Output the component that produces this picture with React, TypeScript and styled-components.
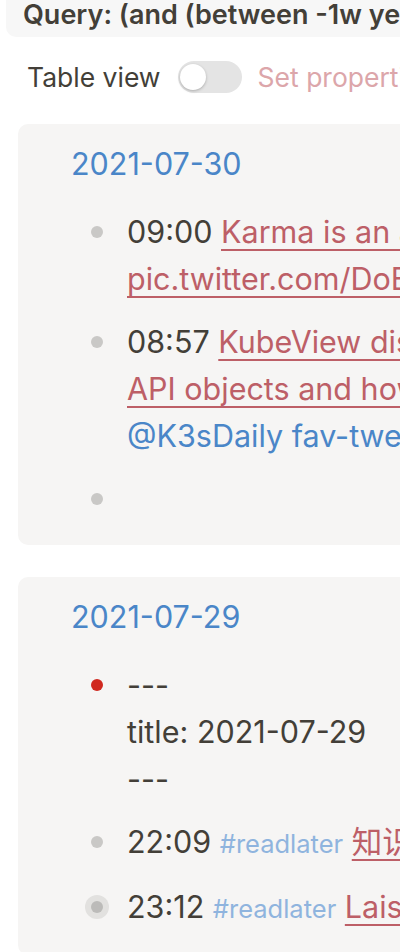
import React from "react";
import styled, { createGlobalStyle } from "styled-components";

const COLOURS = {
  Text: "#433f38",
  Blue: "#4a86c8",
  Link: "#bd5f67",
  Tag: "#8fb4de",
  Pink: "#dca6aa",
  Card: "#f6f5f4",
  Header: "#f7f7f7",
  Bullet: "#c9c8c6",
};

const GlobalStyle = createGlobalStyle`
  html, body {
    margin: 0;
    padding: 0;
    width: 400px;
    height: 952px;
    overflow: hidden;
    background: #ffffff;
  }
  body {
    font-family: Inter, "Noto Sans", "Noto Sans CJK SC", sans-serif;
    color: ${COLOURS.Text};
  }
`;

const Page = styled.div`
  width: 900px;
  display: flex;
  flex-flow: column nowrap;
`;

const QueryHeader = styled.div`
  margin-left: 6px;
  padding: 0 0 7px 17px;
  background-color: ${COLOURS.Header};
  border-bottom-left-radius: 10px;
  font-size: 27px;
  line-height: 30px;
  font-weight: 600;
  white-space: nowrap;
`;

const Toolbar = styled.div`
  display: flex;
  align-items: center;
  margin: 24px 0 31px 27px;
  height: 32px;
  font-size: 26.5px;
  white-space: nowrap;
`;

const Toggle = styled.span`
  position: relative;
  width: 64px;
  height: 32px;
  margin: 0 16px 0 17px;
  border-radius: 16px;
  background-color: #e4e4e4;

  &::after {
    content: "";
    position: absolute;
    left: 2px;
    top: 3px;
    width: 26px;
    height: 26px;
    border-radius: 50%;
    background: #ffffff;
    box-shadow: 0 1px 3px rgba(0, 0, 0, 0.25);
  }
`;

const SetProps = styled.span`
  color: ${COLOURS.Pink};
`;

const Cards = styled.div`
  display: flex;
  flex-flow: column nowrap;
  gap: 32px;
  margin-left: 18px;
`;

const Card = styled.section`
  padding: 16px 0 23px;
  background-color: ${COLOURS.Card};
  border-radius: 10px;
  font-size: 30.5px;
  line-height: 47px;
`;

const PageTitle = styled.div`
  padding-left: 53px;
  margin-bottom: 21px;
  color: ${COLOURS.Blue};
`;

const Blocks = styled.div`
  display: flex;
  flex-flow: column nowrap;
  gap: 16px;
`;

const Block = styled.div`
  display: grid;
  grid-template-columns: 24px 1fr;
  column-gap: 18px;
  padding-left: 67px;
  min-height: 47px;
  white-space: nowrap;
`;

const BulletCell = styled.span`
  display: flex;
  align-items: center;
  justify-content: center;
  height: 47px;
`;

const Dot = styled.span<{ $colour?: string; $collapsed?: boolean }>`
  display: block;
  width: 12px;
  height: 12px;
  border-radius: 50%;
  background-color: ${(p) => p.$colour ?? COLOURS.Bullet};
  box-shadow: ${(p) => (p.$collapsed ? "0 0 0 6px #e2e1df" : "none")};
`;

const Link = styled.span`
  color: ${COLOURS.Link};
  text-decoration: underline;
  text-decoration-thickness: 2px;
  text-underline-offset: 6px;
`;

const PageRef = styled.span`
  color: ${COLOURS.Blue};
`;

const Tag = styled.span`
  color: ${COLOURS.Tag};
  font-size: 25.5px;
`;

interface BulletProps {
  colour?: string;
  collapsed?: boolean;
  children?: React.ReactNode;
}

const Bullet = ({ colour, collapsed, children }: BulletProps) => (
  <Block>
    <BulletCell>
      <Dot $colour={colour} $collapsed={collapsed} />
    </BulletCell>
    <div>{children}</div>
  </Block>
);

export default function App() {
  return (
    <>
      <GlobalStyle />
      <Page>
        <QueryHeader>Query: (and (between -1w yesterday) (task TODO))</QueryHeader>
        <Toolbar>
          Table view
          <Toggle />
          <SetProps>Set properties</SetProps>
        </Toolbar>

        <Cards>
          <Card>
            <PageTitle>2021-07-30</PageTitle>
            <Blocks>
              <Bullet>
                09:00{" "}
                <Link>
                  Karma is an awesome terminal tool for Kubernetes
                  <br />
                  pic.twitter.com/DoBqLx2mVz
                </Link>
              </Bullet>
              <Bullet>
                08:57{" "}
                <Link>
                  KubeView displays Kubernetes cluster
                  <br />
                  API objects and how they are connected
                </Link>
                <br />
                <PageRef>@K3sDaily</PageRef> <PageRef>fav-tweets</PageRef>
              </Bullet>
              <Bullet />
            </Blocks>
          </Card>

          <Card>
            <PageTitle>2021-07-29</PageTitle>
            <Blocks>
              <Bullet colour="#d0291f">
                ---
                <br />
                title: 2021-07-29
                <br />
                ---
              </Bullet>
              <Bullet>
                22:09 <Tag>#readlater</Tag> <Link>知识管理的方法论</Link>
              </Bullet>
              <Bullet colour="#bcbbb9" collapsed>
                23:12 <Tag>#readlater</Tag> <Link>Laise-faire notes</Link>
              </Bullet>
            </Blocks>
          </Card>
        </Cards>
      </Page>
    </>
  );
}
